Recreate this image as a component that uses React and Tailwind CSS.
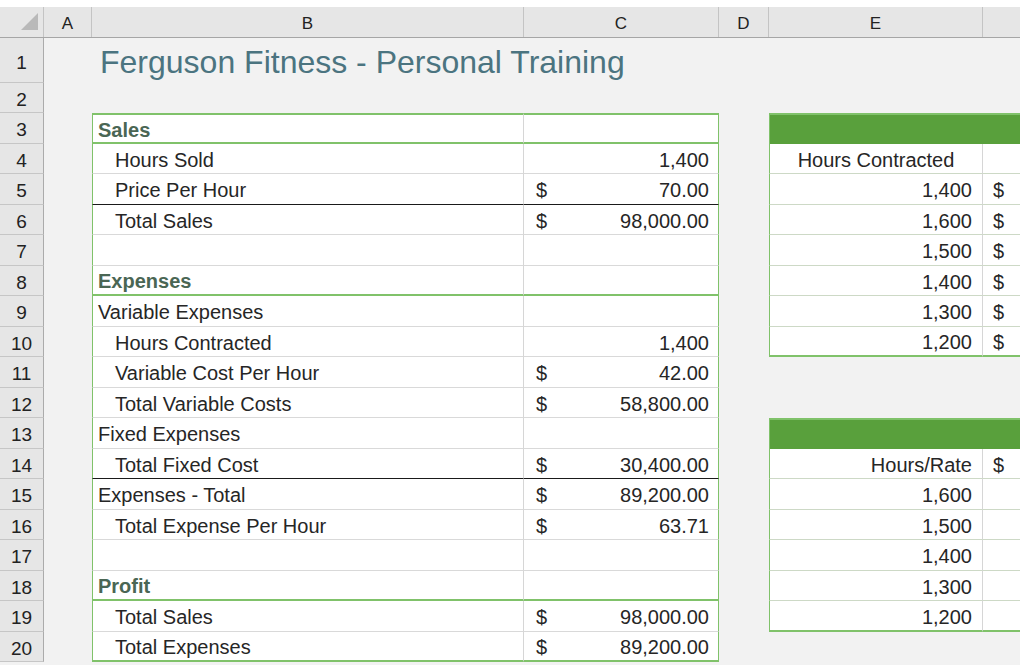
import clsx from 'clsx'

const GREEN = 'border-[#80c26a]'

const left = {
  3: { b: 'Sales', head: true },
  4: { b: 'Hours Sold', indent: true, c: '1,400' },
  5: { b: 'Price Per Hour', indent: true, dollar: true, c: '70.00', black: true },
  6: { b: 'Total Sales', indent: true, dollar: true, c: '98,000.00' },
  7: {},
  8: { b: 'Expenses', head: true },
  9: { b: 'Variable Expenses' },
  10: { b: 'Hours Contracted', indent: true, c: '1,400' },
  11: { b: 'Variable Cost Per Hour', indent: true, dollar: true, c: '42.00' },
  12: { b: 'Total Variable Costs', indent: true, dollar: true, c: '58,800.00' },
  13: { b: 'Fixed Expenses' },
  14: { b: 'Total Fixed Cost', indent: true, dollar: true, c: '30,400.00', black: true },
  15: { b: 'Expenses - Total', dollar: true, c: '89,200.00' },
  16: { b: 'Total Expense Per Hour', indent: true, dollar: true, c: '63.71' },
  17: {},
  18: { b: 'Profit', head: true },
  19: { b: 'Total Sales', indent: true, dollar: true, c: '98,000.00' },
  20: { b: 'Total Expenses', indent: true, dollar: true, c: '89,200.00', last: true },
}

const right = {
  3: { fill: true },
  4: { e: 'Hours Contracted', center: true },
  5: { e: '1,400', f: '$' },
  6: { e: '1,600', f: '$' },
  7: { e: '1,500', f: '$' },
  8: { e: '1,400', f: '$' },
  9: { e: '1,300', f: '$' },
  10: { e: '1,200', f: '$', last: true },
  13: { fill: true },
  14: { e: 'Hours/Rate', f: '$' },
  15: { e: '1,600' },
  16: { e: '1,500' },
  17: { e: '1,400' },
  18: { e: '1,300' },
  19: { e: '1,200', last: true },
}

function LeftCells({ n }) {
  const d = left[n]
  if (!d) {
    return (
      <>
        <div className="w-[432px] shrink-0" />
        <div className="w-[195px] shrink-0" />
      </>
    )
  }
  const bottom = d.head || d.last
    ? 'border-b-2 border-b-[#80c26a]'
    : d.black
    ? 'border-b border-b-[#1a1a1a]'
    : 'border-b border-b-[#d9d9d9]'
  const top = n === 3 ? 'border-t-2 border-t-[#80c26a]' : ''
  return (
    <>
      <div
        className={clsx(
          'w-[432px] shrink-0 bg-white flex items-center pt-[3px] border-l border-r border-r-[#d6d6d6]',
          GREEN,
          bottom,
          top,
          d.indent ? 'pl-[22px]' : 'pl-[5px]',
          d.head ? 'font-bold text-[#4a6654]' : 'text-[#262626]'
        )}
      >
        {d.b}
      </div>
      <div
        className={clsx(
          'w-[195px] shrink-0 bg-white flex items-center justify-between pt-[3px] border-r pl-[12px] pr-[9px] text-[#262626]',
          GREEN,
          bottom,
          top
        )}
      >
        <span>{d.dollar ? '$' : ''}</span>
        <span>{d.c}</span>
      </div>
    </>
  )
}

function RightCells({ n }) {
  const d = right[n]
  if (!d) {
    return (
      <>
        <div className="w-[214px] shrink-0" />
        <div className="flex-1" />
      </>
    )
  }
  if (d.fill) {
    return (
      <>
        <div className="w-[214px] shrink-0 bg-[#59a03c] border-l border-t-2 border-[#80c26a]" />
        <div className="flex-1 bg-[#59a03c] border-t-2 border-[#80c26a]" />
      </>
    )
  }
  const bottom = d.last ? 'border-b-2 border-b-[#80c26a]' : 'border-b border-b-[#cdd9c6]'
  return (
    <>
      <div
        className={clsx(
          'w-[214px] shrink-0 bg-white flex items-center pt-[3px] border-l border-r border-r-[#d6d6d6] text-[#262626]',
          GREEN,
          bottom,
          d.center ? 'justify-center' : 'justify-end pr-[10px]'
        )}
      >
        {d.e}
      </div>
      <div className={clsx('flex-1 bg-white flex items-center pt-[3px] pl-[10px] text-[#262626]', bottom)}>
        {d.f}
      </div>
    </>
  )
}

function RowHead({ n }) {
  return (
    <div className="w-[44px] shrink-0 bg-[#e6e6e6] border-r border-r-[#ababab] border-b border-b-[#c6c6c6] flex items-center justify-center pt-[4px] text-[19px] text-[#222]">
      {n}
    </div>
  )
}

export default function App() {
  const rows = []
  for (let n = 3; n <= 20; n++) rows.push(n)

  return (
    <div
      className="w-[1020px] h-[665px] overflow-hidden bg-[#f2f2f2] text-[20px] leading-none"
      style={{ fontFamily: '"Liberation Sans", Arial, sans-serif' }}
    >
      <div className="h-[7px] bg-white" />

      <div className="h-[31px] flex bg-[#e6e6e6] border-b border-b-[#a6a6a6] text-[17px] text-[#222]">
        <div className="w-[44px] shrink-0 border-r border-r-[#c4c4c4] relative">
          <svg className="absolute left-[21px] top-[6px]" width="17" height="17" viewBox="0 0 17 17">
            <polygon points="17,0 17,17 0,17" fill="#b9b9b9" />
          </svg>
        </div>
        <div className="w-[48px] shrink-0 border-r border-r-[#c4c4c4] flex items-center justify-center pt-[2px]">A</div>
        <div className="w-[432px] shrink-0 border-r border-r-[#c4c4c4] flex items-center justify-center pt-[2px]">B</div>
        <div className="w-[195px] shrink-0 border-r border-r-[#c4c4c4] flex items-center justify-center pt-[2px]">C</div>
        <div className="w-[50px] shrink-0 border-r border-r-[#c4c4c4] flex items-center justify-center pt-[2px]">D</div>
        <div className="w-[214px] shrink-0 border-r border-r-[#c4c4c4] flex items-center justify-center pt-[2px]">E</div>
        <div className="flex-1" />
      </div>

      <div className="h-[45px] flex">
        <RowHead n={1} />
        <div className="w-[48px] shrink-0" />
        <div className="flex-1 flex items-center pl-[8px] pt-[3px] text-[32px] text-[#4b7480]">
          Ferguson Fitness - Personal Training
        </div>
      </div>

      <div className="h-[30px] flex">
        <RowHead n={2} />
      </div>

      {rows.map((n) => (
        <div key={n} className="h-[30.5px] flex">
          <RowHead n={n} />
          <div className="w-[48px] shrink-0" />
          <LeftCells n={n} />
          <div className="w-[50px] shrink-0" />
          <RightCells n={n} />
        </div>
      ))}
    </div>
  )
}
